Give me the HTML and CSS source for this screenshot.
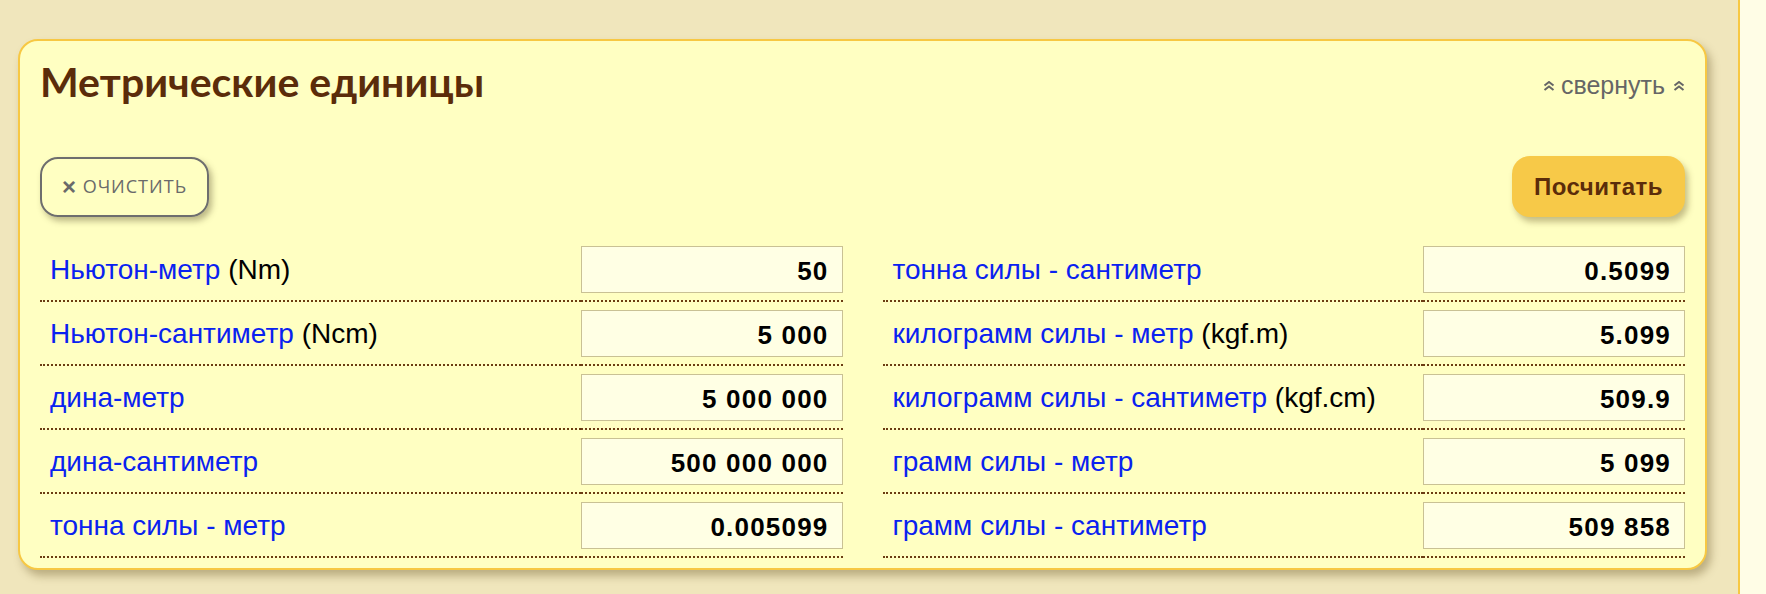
FILE: index.html
```html
<!DOCTYPE html>
<html lang="ru">
   <head>
      <meta charset="utf-8">
      <title>Метрические единицы</title>
      <link rel="stylesheet" href="styles.css">
   </head>
   <body>
      <div class="page">
         <!-- Main column -->
         <main class="content">
            <section class="calc">
               <div class="calc-head">
                  <h2 class="calc-title">Метрические единицы</h2>
                  <a class="toggle" href="#">
                     <svg class="chevrons" width="12" height="10" viewBox="0 0 12 10"><path d="M1.5 4.5 6 1 10.5 4.5M1.5 9 6 5.5 10.5 9" fill="none" stroke="#666" stroke-width="2"/></svg>
                     <span>свернуть</span>
                     <svg class="chevrons" width="12" height="10" viewBox="0 0 12 10"><path d="M1.5 4.5 6 1 10.5 4.5M1.5 9 6 5.5 10.5 9" fill="none" stroke="#666" stroke-width="2"/></svg>
                  </a>
               </div>

               <div class="calc-actions">
                  <button class="btn-clear" type="button"><span class="btn-clear-x">&times;</span> очистить</button>
                  <button class="btn-calc" type="button">Посчитать</button>
               </div>

               <!-- Units grid -->
               <div class="units">
                  <div class="unit-col">
                     <div class="unit-row">
                        <div class="unit-name"><a href="#">Ньютон-метр</a> (Nm)</div>
                        <div class="unit-value"><input type="text" value="50"></div>
                     </div>
                     <div class="unit-row">
                        <div class="unit-name"><a href="#">Ньютон-сантиметр</a> (Ncm)</div>
                        <div class="unit-value"><input type="text" value="5 000"></div>
                     </div>
                     <div class="unit-row">
                        <div class="unit-name"><a href="#">дина-метр</a></div>
                        <div class="unit-value"><input type="text" value="5 000 000"></div>
                     </div>
                     <div class="unit-row">
                        <div class="unit-name"><a href="#">дина-сантиметр</a></div>
                        <div class="unit-value"><input type="text" value="500 000 000"></div>
                     </div>
                     <div class="unit-row">
                        <div class="unit-name"><a href="#">тонна силы - метр</a></div>
                        <div class="unit-value"><input type="text" value="0.005099"></div>
                     </div>
                  </div>

                  <div class="unit-col">
                     <div class="unit-row">
                        <div class="unit-name"><a href="#">тонна силы - сантиметр</a></div>
                        <div class="unit-value"><input type="text" value="0.5099"></div>
                     </div>
                     <div class="unit-row">
                        <div class="unit-name"><a href="#">килограмм силы - метр</a> (kgf.m)</div>
                        <div class="unit-value"><input type="text" value="5.099"></div>
                     </div>
                     <div class="unit-row">
                        <div class="unit-name"><a href="#">килограмм силы - сантиметр</a> (kgf.cm)</div>
                        <div class="unit-value"><input type="text" value="509.9"></div>
                     </div>
                     <div class="unit-row">
                        <div class="unit-name"><a href="#">грамм силы - метр</a></div>
                        <div class="unit-value"><input type="text" value="5 099"></div>
                     </div>
                     <div class="unit-row">
                        <div class="unit-name"><a href="#">грамм силы - сантиметр</a></div>
                        <div class="unit-value"><input type="text" value="509 858"></div>
                     </div>
                  </div>
               </div>
            </section>
         </main>

         <!-- Sidebar edge -->
         <aside class="sidebar"></aside>
      </div>
   </body>
</html>
```

FILE: styles.css
```css
/* Global Styles */
body {
    margin: 0;
    padding: 0;
    background-color: #f0e6bc;
    font-family: "Liberation Sans", Arial, sans-serif;
    color: #000;
}

.page {
    display: flex;
    min-height: 100vh;
}

.content {
    flex: 1;
    padding: 39px 31px 0 18px;
}

.sidebar {
    width: 26px;
    border-left: 2px solid #f7c843;
    background-color: #fffde6;
}

/* Calculator panel */
.calc {
    background-color: #ffffc2;
    border: 2px solid #f7c843;
    border-radius: 20px;
    box-shadow: 4px 6px 8px rgba(90, 70, 20, 0.35);
    padding: 20px 20px 10px 20px;
}

.calc-head {
    display: flex;
    justify-content: space-between;
    align-items: flex-start;
}

.calc-title {
    margin: 0;
    font-family: Lato, "Open Sans", sans-serif;
    font-weight: bold;
    font-size: 41px;
    line-height: 1;
    color: #5b2c0a;
}

.toggle {
    display: flex;
    align-items: center;
    gap: 6px;
    padding-top: 10px;
    font-size: 25px;
    color: #666;
    text-decoration: none;
}

.toggle span {
    margin-right: 2px;
}

.chevrons {
    display: block;
}

/* Buttons */
.calc-actions {
    display: flex;
    justify-content: space-between;
    align-items: center;
    margin-top: 54px;
}

.btn-clear {
    width: 169px;
    height: 60px;
    padding: 0;
    background-color: transparent;
    border: 2px solid #6e6e6e;
    border-radius: 18px;
    box-shadow: 3px 4px 6px rgba(60, 50, 20, 0.35);
    font-family: "Open Sans", sans-serif;
    font-size: 18px;
    letter-spacing: 1px;
    text-transform: uppercase;
    color: #6a6a6a;
    cursor: pointer;
}

.btn-clear-x {
    font-family: "Liberation Sans", Arial, sans-serif;
    font-weight: bold;
    font-size: 24px;
    vertical-align: -2px;
}

.btn-calc {
    width: 173px;
    height: 61px;
    background-color: #f7c948;
    border: none;
    border-radius: 18px;
    box-shadow: 3px 5px 6px rgba(90, 70, 20, 0.35);
    font-family: "Liberation Sans", Arial, sans-serif;
    font-weight: bold;
    font-size: 24px;
    letter-spacing: 0.5px;
    color: #5b2c0a;
    cursor: pointer;
}

/* Units grid */
.units {
    display: grid;
    grid-template-columns: 1fr 1fr;
    column-gap: 40px;
    margin-top: 21px;
}

.unit-row {
    display: flex;
}

.unit-name,
.unit-value {
    padding: 8px 0 7px 0;
    border-bottom: 2px dotted #6b3c12;
}

.unit-name {
    flex: 1;
    padding-left: 10px;
    font-size: 28px;
    line-height: 47px;
    white-space: nowrap;
}

.unit-name a {
    color: #0a22f0;
    text-decoration: none;
}

.unit-value {
    width: 262px;
}

.unit-value input {
    display: block;
    box-sizing: border-box;
    width: 100%;
    height: 47px;
    margin: 0;
    padding: 10px 13px 7px 10px;
    background-color: #ffffe4;
    border: 1px solid #c9c194;
    font-family: "Liberation Sans", Arial, sans-serif;
    font-weight: bold;
    font-size: 26px;
    letter-spacing: 1.2px;
    text-align: right;
    color: #000;
}
```
